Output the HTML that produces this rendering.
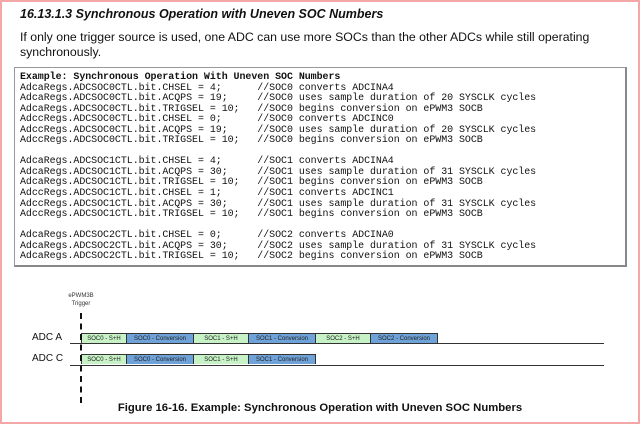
<!DOCTYPE html>
<html><head><meta charset="utf-8"><style>
body{margin:0;width:640px;height:424px;background:#fff;position:relative;overflow:hidden;font-family:"Liberation Sans",sans-serif;}
.frame{position:absolute;left:0;top:0;width:636px;height:420px;border:2px solid #f4a7a7;}
.h{position:absolute;left:20px;top:7px;font-size:12.5px;font-weight:bold;font-style:italic;color:#111;}
.p{position:absolute;left:20px;top:30px;font-size:12.3px;line-height:14.5px;color:#111;width:610px;}
.code{position:absolute;left:14px;top:67px;width:610px;height:197px;border:1px solid #999;border-right:2px solid #888;border-bottom:2px solid #888;}
pre{position:absolute;left:20px;top:72px;margin:0;font-family:"Liberation Mono",monospace;font-size:9.98px;line-height:10.55px;color:#111;letter-spacing:-0.05px;}
.a{position:absolute;}
.seg{position:absolute;height:10px;font-size:6px;line-height:10px;text-align:center;color:#222;box-sizing:border-box;border:1px solid #333;border-bottom:none;}
.g{background:#c6f2c6;}.b{background:#6fa2d8;}
.line{position:absolute;height:1px;background:#333;left:70px;width:534px;}
.cap{position:absolute;left:0;width:640px;text-align:center;top:402px;font-size:11.3px;font-weight:bold;color:#111;}
</style></head><body>
<div class="frame"></div>
<div class="h">16.13.1.3 Synchronous Operation with Uneven SOC Numbers</div>
<div class="p">If only one trigger source is used, one ADC can use more SOCs than the other ADCs while still operating synchronously.</div>
<div class="code"></div>
<pre><b>Example: Synchronous Operation With Uneven SOC Numbers</b>
AdcaRegs.ADCSOC0CTL.bit.CHSEL = 4;      //SOC0 converts ADCINA4
AdcaRegs.ADCSOC0CTL.bit.ACQPS = 19;     //SOC0 uses sample duration of 20 SYSCLK cycles
AdcaRegs.ADCSOC0CTL.bit.TRIGSEL = 10;   //SOC0 begins conversion on ePWM3 SOCB
AdccRegs.ADCSOC0CTL.bit.CHSEL = 0;      //SOC0 converts ADCINC0
AdccRegs.ADCSOC0CTL.bit.ACQPS = 19;     //SOC0 uses sample duration of 20 SYSCLK cycles
AdccRegs.ADCSOC0CTL.bit.TRIGSEL = 10;   //SOC0 begins conversion on ePWM3 SOCB

AdcaRegs.ADCSOC1CTL.bit.CHSEL = 4;      //SOC1 converts ADCINA4
AdcaRegs.ADCSOC1CTL.bit.ACQPS = 30;     //SOC1 uses sample duration of 31 SYSCLK cycles
AdcaRegs.ADCSOC1CTL.bit.TRIGSEL = 10;   //SOC1 begins conversion on ePWM3 SOCB
AdccRegs.ADCSOC1CTL.bit.CHSEL = 1;      //SOC1 converts ADCINC1
AdccRegs.ADCSOC1CTL.bit.ACQPS = 30;     //SOC1 uses sample duration of 31 SYSCLK cycles
AdccRegs.ADCSOC1CTL.bit.TRIGSEL = 10;   //SOC1 begins conversion on ePWM3 SOCB

AdcaRegs.ADCSOC2CTL.bit.CHSEL = 0;      //SOC2 converts ADCINA0
AdcaRegs.ADCSOC2CTL.bit.ACQPS = 30;     //SOC2 uses sample duration of 31 SYSCLK cycles
AdcaRegs.ADCSOC2CTL.bit.TRIGSEL = 10;   //SOC2 begins conversion on ePWM3 SOCB</pre>

<div class="a" style="left:66px;top:292px;width:30px;text-align:center;font-size:6px;color:#333;line-height:8px;">ePWM3B<br>Trigger</div>
<div class="a" style="left:32px;top:332px;font-size:10px;color:#111;">ADC A</div>
<div class="a" style="left:32px;top:353px;font-size:10px;color:#111;">ADC C</div>

<div class="seg g" style="left:81px;top:333px;width:46px;">SOC0 - S+H</div>
<div class="seg b" style="left:126px;top:333px;width:68px;">SOC0 - Conversion</div>
<div class="seg g" style="left:193px;top:333px;width:56px;">SOC1 - S+H</div>
<div class="seg b" style="left:248px;top:333px;width:68px;">SOC1 - Conversion</div>
<div class="seg g" style="left:315px;top:333px;width:56px;">SOC2 - S+H</div>
<div class="seg b" style="left:370px;top:333px;width:68px;">SOC2 - Conversion</div>
<div class="line" style="top:343px;"></div>

<div class="seg g" style="left:81px;top:354px;width:46px;">SOC0 - S+H</div>
<div class="seg b" style="left:126px;top:354px;width:68px;">SOC0 - Conversion</div>
<div class="seg g" style="left:193px;top:354px;width:56px;">SOC1 - S+H</div>
<div class="seg b" style="left:248px;top:354px;width:68px;">SOC1 - Conversion</div>
<div class="line" style="top:365px;"></div>

<div class="a" style="left:80px;top:313px;width:0;height:90px;border-left:2px dashed #111;"></div>

<div class="cap">Figure 16-16. Example: Synchronous Operation with Uneven SOC Numbers</div>
</body></html>
